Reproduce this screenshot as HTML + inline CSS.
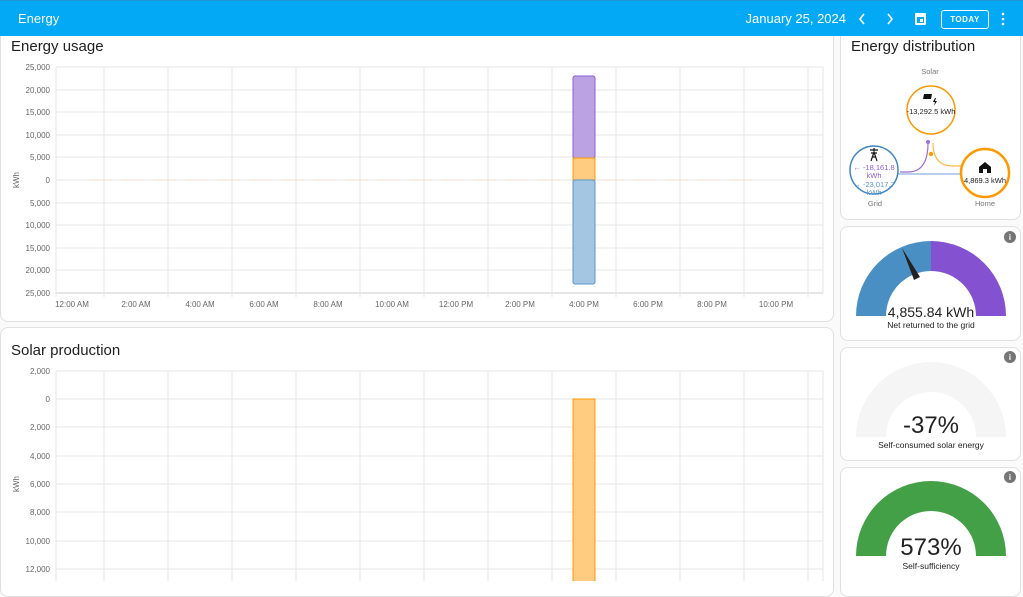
<!DOCTYPE html>
<html><head><style>
body{margin:0;width:1023px;height:581px;overflow:hidden;background:#fafafa;font-family:"Liberation Sans",sans-serif;position:relative}
.hdr{position:absolute;left:0;top:0;width:1023px;height:35px;background:#03a9f4;color:#fff;border-top:1px solid #2196d3;z-index:10}
.card{position:absolute;background:#fff;border:1px solid #e0e0e0;border-radius:8px;box-sizing:border-box}
.t{position:absolute;font-size:15px;color:#212121}
svg text{font-family:"Liberation Sans",sans-serif}
</style></head><body>
<div class="hdr">
<div style="position:absolute;left:18px;top:10px;font-size:13px">Energy</div>
<div style="position:absolute;right:177px;top:10px;font-size:13px;white-space:nowrap">January 25, 2024</div>
<svg style="position:absolute;left:856px;top:10px" width="167" height="16"><path d="M8 3 4 8 8 13" stroke="#fff" stroke-width="1.6" fill="none"/><path d="M32 3 36 8 32 13" stroke="#fff" stroke-width="1.6" fill="none"/>
<rect x="59" y="2" width="11" height="12" rx="1" fill="#fff"/><rect x="61" y="6" width="7" height="6" fill="#03a9f4"/><rect x="64" y="8" width="3" height="3" fill="#fff"/>
<circle cx="147" cy="3" r="1.3" fill="#fff"/><circle cx="147" cy="8" r="1.3" fill="#fff"/><circle cx="147" cy="13" r="1.3" fill="#fff"/></svg>
<div style="position:absolute;left:941px;top:9px;width:46px;height:17px;border:1px solid #fff;border-radius:3px;font-size:8px;font-weight:bold;text-align:center;line-height:17px;letter-spacing:.5px">TODAY</div>
</div>
<div class="card" style="left:0;top:20px;width:834px;height:302px"></div>
<div class="t" style="left:11px;top:38px">Energy usage</div>
<div class="card" style="left:0;top:327px;width:834px;height:270px"></div>
<div class="t" style="left:11px;top:342px">Solar production</div>
<svg style="position:absolute;left:0;top:0" width="834" height="581" font-size="8" fill="#666">
<g stroke="#e6e6e6" stroke-width="1">
<line x1="56" y1="67" x2="823" y2="67"/><line x1="56" y1="90" x2="823" y2="90"/><line x1="56" y1="112" x2="823" y2="112"/><line x1="56" y1="135" x2="823" y2="135"/><line x1="56" y1="157" x2="823" y2="157"/><line x1="56" y1="180" x2="823" y2="180"/><line x1="56" y1="203" x2="823" y2="203"/><line x1="56" y1="225" x2="823" y2="225"/><line x1="56" y1="248" x2="823" y2="248"/><line x1="56" y1="270" x2="823" y2="270"/><line x1="56" y1="293" x2="823" y2="293" stroke="#ccc"/>
<line x1="56" y1="371" x2="823" y2="371"/><line x1="56" y1="399" x2="823" y2="399"/><line x1="56" y1="427" x2="823" y2="427"/><line x1="56" y1="456" x2="823" y2="456"/><line x1="56" y1="484" x2="823" y2="484"/><line x1="56" y1="512" x2="823" y2="512"/><line x1="56" y1="541" x2="823" y2="541"/><line x1="56" y1="569" x2="823" y2="569"/>
<path d="M56 67V297M104 67V297M168 67V297M232 67V297M296 67V297M360 67V297M424 67V297M488 67V297M552 67V297M616 67V297M680 67V297M744 67V297M808 67V297M823 67V293"/>
<path d="M56 371V581M104 371V581M168 371V581M232 371V581M296 371V581M360 371V581M424 371V581M488 371V581M552 371V581M616 371V581M680 371V581M744 371V581M808 371V581M823 371V581"/>
</g>
<g text-anchor="end"><text x="50" y="70">25,000</text><text x="50" y="93">20,000</text><text x="50" y="115">15,000</text><text x="50" y="138">10,000</text><text x="50" y="160">5,000</text><text x="50" y="183">0</text><text x="50" y="206">5,000</text><text x="50" y="228">10,000</text><text x="50" y="251">15,000</text><text x="50" y="273">20,000</text><text x="50" y="296">25,000</text>
<text x="50" y="374">2,000</text><text x="50" y="402">0</text><text x="50" y="430">2,000</text><text x="50" y="459">4,000</text><text x="50" y="487">6,000</text><text x="50" y="515">8,000</text><text x="50" y="544">10,000</text><text x="50" y="572">12,000</text></g>
<text transform="translate(19 180) rotate(-90)" text-anchor="middle">kWh</text>
<text transform="translate(19 484) rotate(-90)" text-anchor="middle">kWh</text>
<g text-anchor="middle"><text x="72" y="307">12:00 AM</text><text x="136" y="307">2:00 AM</text><text x="200" y="307">4:00 AM</text><text x="264" y="307">6:00 AM</text><text x="328" y="307">8:00 AM</text><text x="392" y="307">10:00 AM</text><text x="456" y="307">12:00 PM</text><text x="520" y="307">2:00 PM</text><text x="584" y="307">4:00 PM</text><text x="648" y="307">6:00 PM</text><text x="712" y="307">8:00 PM</text><text x="776" y="307">10:00 PM</text></g>
<line x1="90" y1="180" x2="760" y2="180" stroke="#f0d8c8" stroke-dasharray="22 10"/>
<rect x="573" y="76" width="22" height="82" rx="2" fill="#bba3e3" stroke="#8e5fd4"/>
<rect x="573" y="158" width="22" height="22" fill="#ffcc80" stroke="#ff9800"/>
<rect x="573" y="180" width="22" height="104" rx="2" fill="#a4c6e2" stroke="#5a94c8"/>
<rect x="573" y="399" width="22" height="190" fill="#ffcc80" stroke="#ff9800"/>
</svg>
<div class="card" style="left:840px;top:20px;width:181px;height:200px"></div>
<div class="t" style="left:851px;top:38px">Energy distribution</div>
<svg style="position:absolute;left:840px;top:60px" width="181" height="160" font-size="7.5" text-anchor="middle">
<text x="90" y="14" fill="#777">Solar</text>
<path d="M88 83 Q88 112 68 112 L60 112" stroke="#9b6fd8" stroke-width="1.2" fill="none"/>
<path d="M93 83 Q93 106 113 106 L122 106" stroke="#ffb74d" stroke-width="1.2" fill="none"/>
<circle cx="91" cy="94" r="2.2" fill="#ff9800"/><circle cx="88" cy="82" r="2" fill="#9b6fd8"/>
<line x1="58" y1="114" x2="122" y2="114" stroke="#8ab4dc" stroke-width="1.2"/>
<circle cx="91" cy="50" r="24" fill="#fff" stroke="#ff9800" stroke-width="1.5"/>
<path d="M84 34h8l-1 5h-8z M84 40l3 0" fill="#111"/><path d="M95 38l-2 4h2l-1 4 3-5h-2l1-3z" fill="#111"/>
<text x="91" y="54" fill="#222">-13,292.5 kWh</text>
<circle cx="34" cy="110" r="24" fill="#fff" stroke="#3f86c6" stroke-width="1.5"/>
<path d="M30 90h8M31 93h6M34 88v3M31 101l3-9 3 9M32 97h4" stroke="#111" stroke-width="1.2" fill="none"/>
<text x="34" y="110" fill="#8e5fd4">← -18,161.8</text><text x="34" y="118" fill="#8e5fd4">kWh</text>
<text x="34" y="127" fill="#5a94c8">→ -23,017.7</text><text x="34" y="135" fill="#5a94c8">kWh</text>
<text x="35" y="146" fill="#777">Grid</text>
<circle cx="145" cy="113" r="24" fill="#fff" stroke="#ff9800" stroke-width="2.5"/>
<path d="M139 107l6-5 6 5v6h-4v-4h-4v4h-4z" fill="#111"/>
<text x="145" y="123" fill="#222">4,869.3 kWh</text>
<text x="145" y="146" fill="#777">Home</text>
</svg>
<div class="card" style="left:840px;top:226px;width:181px;height:115px"></div>
<div class="card" style="left:840px;top:347px;width:181px;height:114px"></div>
<div class="card" style="left:840px;top:467px;width:181px;height:130px"></div>
<svg style="position:absolute;left:840px;top:226px" width="181" height="355" text-anchor="middle">
<g fill="#757575"><circle cx="170" cy="11" r="6"/><circle cx="170" cy="131" r="6"/><circle cx="170" cy="251" r="6"/></g>
<g fill="#fff" font-size="8" font-weight="bold"><text x="170" y="14">i</text><text x="170" y="134">i</text><text x="170" y="254">i</text></g>
<path d="M16 90 A75 75 0 0 1 91 15 L91 45 A45 45 0 0 0 46 90Z" fill="#4a8fc4"/>
<path d="M91 15 A75 75 0 0 1 166 90 L136 90 A45 45 0 0 0 91 45Z" fill="#8452d1"/>
<path d="M62 22 L80 51 L74 54Z" fill="#222"/>
<text x="91" y="91" font-size="14" fill="#222">4,855.84 kWh</text>
<text x="91" y="102" font-size="8.5" fill="#222">Net returned to the grid</text>
<path d="M16 211 A75 75 0 0 1 166 211 L136 211 A45 45 0 0 0 46 211Z" fill="#f5f5f5"/>
<text x="91" y="207" font-size="24" fill="#222">-37%</text>
<text x="91" y="222" font-size="8.5" fill="#222">Self-consumed solar energy</text>
<path d="M16 330 A75 75 0 0 1 166 330 L136 330 A45 45 0 0 0 46 330Z" fill="#43a047"/>
<text x="91" y="329" font-size="24" fill="#222">573%</text>
<text x="91" y="343" font-size="8.5" fill="#222">Self-sufficiency</text>
</svg>
</body></html>
